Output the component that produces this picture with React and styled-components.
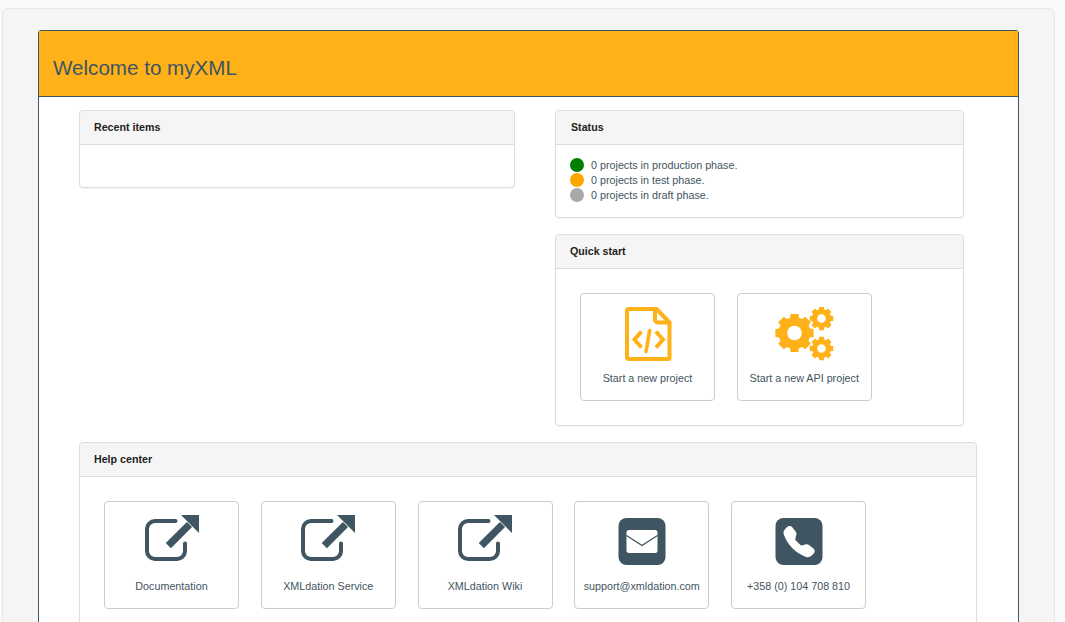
import React from "react";
import styled, { createGlobalStyle } from "styled-components";

const Global = createGlobalStyle`
  html, body { margin: 0; height: 622px; overflow: hidden; background: #fafafa; }
  body { font-family: "Liberation Sans", Arial, sans-serif; font-size: 10.75px; color: #3f5561; }
`;
const Well = styled.div`
  margin: 8px 10px 0 2px;
  padding: 21px 35px 0;
  height: 900px;
  background: #f5f5f5;
  border: 1px solid #e6e6e6;
  border-radius: 6px;
`;
const Main = styled.div`
  background: #fff;
  border: 1px solid #3f5561;
  border-radius: 3px 3px 0 0;
  height: 800px;
`;
const Banner = styled.div`
  box-sizing: border-box;
  height: 66px;
  background: #feb118;
  border-bottom: 1px solid #3f5561;
  display: flex;
  align-items: flex-end;
  padding: 0 14px 16px;
`;
const Title = styled.h1`
  margin: 0;
  font-size: 20.6px;
  line-height: 24px;
  font-weight: 400;
  color: #3f5561;
`;
const Body = styled.div`
  padding: 13px 0 0 40px;
`;
const Columns = styled.div`
  display: grid;
  grid-template-columns: 436px 409px;
  column-gap: 40px;
  align-items: start;
`;
const Stack = styled.div`
  display: flex;
  flex-direction: column;
  gap: 16px;
`;
const Card = styled.section`
  background: #fff;
  border: 1px solid #ddd;
  border-radius: 4px;
  box-shadow: 0 1px 1px rgba(0, 0, 0, 0.05);
  box-sizing: border-box;
  width: ${(p) => p.$width || "auto"};
  margin-top: ${(p) => p.$top || 0};
`;
const CardHead = styled.div`
  box-sizing: border-box;
  height: 34px;
  line-height: 32px;
  padding-left: ${(p) => p.$pad || 14}px;
  background: #f5f5f5;
  border-bottom: 1px solid #ddd;
  border-radius: 4px 4px 0 0;
  font-weight: 700;
  font-size: 10.67px;
  color: #222;
`;
const EmptyBody = styled.div`
  height: 42px;
`;
const StatusBody = styled.div`
  padding: 12px 14px 15px;
`;
const StatusRow = styled.div`
  display: flex;
  align-items: center;
  height: 15px;
  gap: 7px;
`;
const Dot = styled.span`
  width: 14px;
  height: 14px;
  border-radius: 50%;
  background: ${(p) => p.$color};
`;
const Tiles = styled.div`
  display: flex;
  gap: 21.75px;
  padding: 24px;
`;
const Tile = styled.a`
  width: 135px;
  height: 108px;
  box-sizing: border-box;
  border: 1px solid #ccc;
  border-radius: 4px;
  padding-top: 13px;
  display: flex;
  flex-direction: column;
  align-items: center;
  color: #3f5561;
`;
const IconSvg = styled.svg`
  display: block;
  width: 60px;
  height: 54px;
  flex: none;
`;
const TileLabel = styled.span`
  margin-top: 10px;
  line-height: 15px;
  white-space: nowrap;
`;

const gearPath = (cx, cy, outer, inner, hole, teeth, rot = 0) => {
  const pts = [];
  const step = (Math.PI * 2) / teeth;
  for (let i = 0; i < teeth; i++) {
    const a = rot + i * step;
    const w = step * 0.26;
    const b = step * 0.36;
    [[-b, inner], [-w, outer], [w, outer], [b, inner]].forEach(([d, r]) => {
      pts.push(`${(cx + r * Math.cos(a + d)).toFixed(2)} ${(cy + r * Math.sin(a + d)).toFixed(2)}`);
    });
  }
  const ring = `M${cx - hole} ${cy}a${hole} ${hole} 0 1 0 ${hole * 2} 0a${hole} ${hole} 0 1 0 ${-hole * 2} 0Z`;
  return `M${pts.join("L")}Z${ring}`;
};

const DocIcon = () => (
  <IconSvg viewBox="0 0 60 54">
    <g fill="none" stroke="#feb118" strokeWidth="4" strokeLinejoin="round" strokeLinecap="round">
      <path d="M38.500 2H11a2 2 0 0 0-2 2v46a2 2 0 0 0 2 2h39.500a1 1 0 0 0 1-1V15.500Z" />
      <path d="M37 2v10.500a3 3 0 0 0 3 3h11.500" />
    </g>
    <g fill="none" stroke="#feb118" strokeWidth="4">
      <path d="M23.500 24.500l-7 8 7 8" />
      <path d="M38 24.500l7 8-7 8" />
      <path d="M31.700 23.500L28 44.500" strokeLinecap="round" strokeWidth="3.600" />
    </g>
  </IconSvg>
);
const CogsIcon = () => (
  <IconSvg viewBox="0 0 60 54">
    <g fill="#feb118" fillRule="evenodd">
      <path d={gearPath(20.5, 26, 19.500, 16, 7.300, 8)} />
      <path d={gearPath(47.5, 11.500, 12, 9.500, 4.300, 8)} />
      <path d={gearPath(47.5, 41.500, 12, 9.500, 4.300, 8)} />
    </g>
  </IconSvg>
);
const LinkIcon = () => (
  <IconSvg viewBox="0 0 60 54">
    <path d="M33.500 6H13a8 8 0 0 0-8 8v22a8 8 0 0 0 8 8h22a8 8 0 0 0 8-8V28.500" fill="none" stroke="#3f5561" strokeWidth="4" strokeLinecap="round" />
    <path d="M26.300 30.700L47.500 9.500" fill="none" stroke="#3f5561" strokeWidth="7.300" />
    <path d="M39 0H57V18Z" fill="#3f5561" />
  </IconSvg>
);
const MailIcon = () => (
  <IconSvg viewBox="0 0 60 54">
    <rect x="6.500" y="3" width="47" height="47" rx="8" fill="#3f5561" />
    <rect x="14.500" y="15" width="31" height="23" rx="2.500" fill="#fff" />
    <path d="M14.500 20.500L30 30.500l15.500-10" fill="none" stroke="#3f5561" strokeWidth="1.300" />
  </IconSvg>
);
const PhoneIcon = () => (
  <IconSvg viewBox="0 0 60 54">
    <rect x="6.500" y="3" width="47" height="47" rx="8" fill="#3f5561" />
    <path
      transform="translate(14.500 11) scale(1.950)"
      d="M1.885.511a1.745 1.745 0 0 1 2.610.163L6.290 2.980c.329.423.445.974.315 1.494l-.547 2.190a.678.678 0 0 0 .178.643l2.457 2.457a.678.678 0 0 0 .644.178l2.189-.547a1.745 1.745 0 0 1 1.494.315l2.306 1.794c.829.645.905 1.870.163 2.611l-1.034 1.034c-.74.740-1.846 1.065-2.877.702a18.634 18.634 0 0 1-7.010-4.420 18.634 18.634 0 0 1-4.420-7.009c-.362-1.030-.037-2.137.703-2.877L1.885.511z"
      fill="#fff"
    />
  </IconSvg>
);

const quick = [
  { label: "Start a new project", Icon: DocIcon },
  { label: "Start a new API project", Icon: CogsIcon },
];
const help = [
  { label: "Documentation", Icon: LinkIcon },
  { label: "XMLdation Service", Icon: LinkIcon },
  { label: "XMLdation Wiki", Icon: LinkIcon },
  { label: "support@xmldation.com", Icon: MailIcon },
  { label: "+358 (0) 104 708 810", Icon: PhoneIcon },
];
const statuses = [
  { color: "#008000", text: "0 projects in production phase." },
  { color: "#ffa500", text: "0 projects in test phase." },
  { color: "#a9a9a9", text: "0 projects in draft phase." },
];

const TileList = ({ items }) => (
  <Tiles>
    {items.map(({ label, Icon }) => (
      <Tile key={label}>
        <Icon />
        <TileLabel>{label}</TileLabel>
      </Tile>
    ))}
  </Tiles>
);

export default function App() {
  return (
    <>
      <Global />
      <Well>
        <Main>
          <Banner>
            <Title>Welcome to myXML</Title>
          </Banner>
          <Body>
            <Columns>
              <Card>
                <CardHead>Recent items</CardHead>
                <EmptyBody />
              </Card>
              <Stack>
                <Card>
                  <CardHead $pad={15}>Status</CardHead>
                  <StatusBody>
                    {statuses.map((s) => (
                      <StatusRow key={s.text}>
                        <Dot $color={s.color} />
                        {s.text}
                      </StatusRow>
                    ))}
                  </StatusBody>
                </Card>
                <Card>
                  <CardHead>Quick start</CardHead>
                  <TileList items={quick} />
                </Card>
              </Stack>
            </Columns>
            <Card $width="898px" $top="16px">
              <CardHead>Help center</CardHead>
              <TileList items={help} />
            </Card>
          </Body>
        </Main>
      </Well>
    </>
  );
}
